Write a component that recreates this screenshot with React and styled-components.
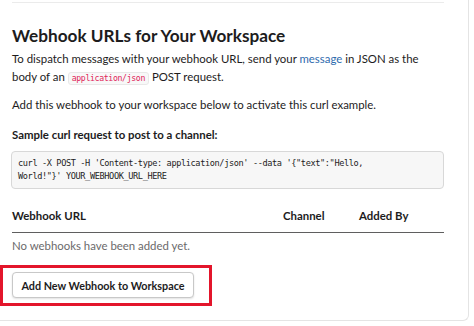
import React from 'react'
import styled, { createGlobalStyle } from 'styled-components'

const Global = createGlobalStyle`
  html, body { margin: 0; padding: 0; background: #fff; }
  body {
    font-family: Lato, "Noto Sans", sans-serif;
    color: #1d1c1d;
    -webkit-font-smoothing: antialiased;
  }
`

const Card = styled.div`
  width: 469px;
  height: 321px;
  box-sizing: border-box;
  border-right: 1px solid #e4e4e4;
  border-bottom: 1px solid #e4e4e4;
  border-bottom-right-radius: 6px;
  padding: 2px 24px 0 12px;
  overflow: hidden;
`

const Rule = styled.div`
  height: 1px;
  background: #ebebeb;
`

const Title = styled.h2`
  margin: 22px 0 0;
  font-size: 17.2px;
  line-height: 22px;
  font-weight: 700;
`

const Text = styled.p`
  margin: ${p => p.$gap || 0}px 0 0;
  font-size: 11.4px;
  line-height: 18px;
  font-weight: ${p => (p.$bold ? 700 : 400)};
  color: ${p => (p.$muted ? '#6b6a6b' : '#1d1c1d')};
`

const Link = styled.a`
  color: #2f6cae;
  text-decoration: none;
`

const InlineCode = styled.code`
  display: inline-block;
  font-family: "DejaVu Sans Mono", monospace;
  font-size: 8.2px;
  line-height: 11px;
  letter-spacing: -0.35px;
  color: #e01e5a;
  background: #f8f8f8;
  border: 1px solid #e8e8e8;
  border-radius: 3px;
  padding: 0 3px;
  vertical-align: 0;
`

const CodeBlock = styled.pre`
  margin: 6.5px 0 0 -1px;
  padding: 5px 6px;
  background: #f7f7f7;
  border: 1px solid #d8d8d8;
  border-radius: 4px;
  font-family: "DejaVu Sans Mono", monospace;
  font-size: 8.6px;
  letter-spacing: -0.38px;
  line-height: 13px;
  color: #1d1c1d;
  white-space: pre-wrap;
`

const Table = styled.div`
  margin-top: 18.5px;
`

const HeadRow = styled.div`
  display: grid;
  grid-template-columns: 271px 76px 1fr;
  padding-bottom: 7px;
  border-bottom: 1px solid #5f5e5f;
  font-size: 11.4px;
  line-height: 18px;
  font-weight: 700;
`

const Highlight = styled.div`
  width: 212px;
  box-sizing: border-box;
  margin: 10.5px 0 0 -12px;
  padding: 4px 0 5px 9px;
  border: 3px solid #e3152b;
`

const Button = styled.button`
  display: block;
  height: 26px;
  width: 182px;
  padding: 0;
  font-family: Lato, sans-serif;
  font-size: 10.8px;
  font-weight: 700;
  color: #1d1c1d;
  background: #fff;
  border: 1px solid #c8c8c8;
  border-radius: 4px;
  box-shadow: 0 1px 2px rgba(0, 0, 0, 0.12);
  white-space: nowrap;
`

export default function App() {
  return (
    <>
      <Global />
      <Card>
        <Rule />
        <Title>Webhook URLs for Your Workspace</Title>
        <Text $gap={3}>
          To dispatch messages with your webhook URL, send your <Link href="#">message</Link> in JSON as the
          body of an <InlineCode>application/json</InlineCode> POST request.
        </Text>
        <Text $gap={10}>Add this webhook to your workspace below to activate this curl example.</Text>
        <Text $gap={12} $bold>Sample curl request to post to a channel:</Text>
        <CodeBlock>{`curl -X POST -H 'Content-type: application/json' --data '{"text":"Hello,\nWorld!"}' YOUR_WEBHOOK_URL_HERE`}</CodeBlock>
        <Table>
          <HeadRow>
            <span>Webhook URL</span>
            <span>Channel</span>
            <span>Added By</span>
          </HeadRow>
          <Text $gap={3.5} $muted>No webhooks have been added yet.</Text>
        </Table>
        <Highlight>
          <Button>Add New Webhook to Workspace</Button>
        </Highlight>
      </Card>
    </>
  )
}
